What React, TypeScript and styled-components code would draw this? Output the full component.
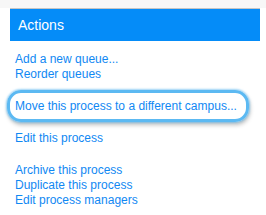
import styled, { createGlobalStyle } from "styled-components";

const GlobalStyle = createGlobalStyle`
body {
  margin: 0;
  background: #ffffff;
  font-family: "Liberation Sans", Arial, sans-serif;
}
`;

const Page = styled.div`
background: linear-gradient(#f7f7f7, #f7f7f7) top / 100% 8px no-repeat, #ffffff;
padding: 8px 6px 0 10px;
width: 266px;
height: 215px;
box-sizing: border-box;
`;

const Panel = styled.div`
width: 250px;
border-top: 1px solid #c4c4c4;
`;

const Header = styled.div`
height: 32px;
background-color: #058cf8;
color: white;
font-size: 14px;
display: flex;
align-items: center;
padding-left: 8px;
`;

const Group = styled.ul`
list-style: none;
margin: 0;
padding: 0;
& + & {
  margin-top: 17px;
}
`;

const Groups = styled.div`
padding-top: 9px;
`;

const Item = styled.li`
height: 15px;
line-height: 15px;
`;

const Link = styled.a<{ $focused?: boolean }>`
color: #1088f3;
font-size: 12px;
text-decoration: none;
padding-left: 5px;
display: inline-block;
${(p) =>
  p.$focused &&
  `
  position: relative;
  &::after {
    content: "";
    position: absolute;
    left: -3px;
    right: -12px;
    top: -9px;
    bottom: -8px;
    border-radius: 14px;
    border: 3px solid #5cb9f2;
    box-shadow: 0 0 2px 1px rgba(92, 185, 242, 0.6), 1px 3px 4px rgba(0, 0, 0, 0.25);
  }
  `}
`;

const groups = [
  ["Add a new queue...", "Reorder queues"],
  ["Move this process to a different campus..."],
  ["Edit this process"],
  ["Archive this process", "Duplicate this process", "Edit process managers"],
];

export default function App() {
  return (
    <>
      <GlobalStyle />
      <Page>
        <Panel>
          <Header>Actions</Header>
          <Groups>
            {groups.map((g, i) => (
              <Group key={i}>
                {g.map((t) => (
                  <Item key={t}>
                    <Link href="#" $focused={t.startsWith("Move")}>
                      {t}
                    </Link>
                  </Item>
                ))}
              </Group>
            ))}
          </Groups>
        </Panel>
      </Page>
    </>
  );
}
